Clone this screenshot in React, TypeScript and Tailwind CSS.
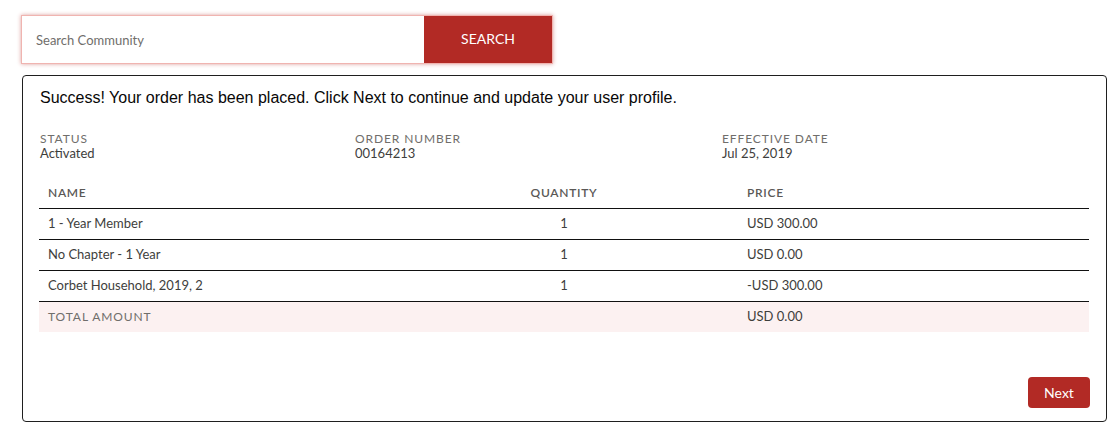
const rows = [
  { name: "1 - Year Member", qty: "1", price: "USD 300.00" },
  { name: "No Chapter - 1 Year", qty: "1", price: "USD 0.00" },
  { name: "Corbet Household, 2019, 2", qty: "1", price: "-USD 300.00" },
];

export default function App() {
  return (
    <div className="h-[427px] w-[1119px] bg-white font-['Lato','Noto_Sans',sans-serif] text-[#3e3e3c]">
      <div className="pl-[21px] pt-[15px]">
        <div className="flex h-[49px] w-[532px] border border-[#f0b4b0] shadow-[0_0_4px_rgba(178,42,37,0.45)]">
          <input
            className="h-full flex-1 bg-white px-[14px] text-[13px] text-[#3e3e3c] outline-none placeholder:text-[#706e6b]"
            placeholder="Search Community"
          />
          <button className="h-full w-[128px] bg-[#b22a25] pb-[2px] text-[14px] text-white">SEARCH</button>
        </div>
      </div>

      <div className="ml-[22px] mt-[11px] flex h-[347px] w-[1085px] flex-col rounded-[4px] border border-[#1f1f1f] px-[16px] pt-[12px]">
        <p className="pl-[1px] font-['Liberation_Sans',Arial,sans-serif] text-[16px] leading-[20px] text-[#080707]">
          Success! Your order has been placed. Click Next to continue and update your user profile.
        </p>

        <div className="mt-[24px] flex pl-[1px] text-[13px] leading-[14px]">
          <div className="w-[315px]">
            <div className="text-[12px] tracking-[0.9px] text-[#706e6b]">STATUS</div>
            <div>Activated</div>
          </div>
          <div className="w-[367px]">
            <div className="text-[12px] tracking-[0.9px] text-[#706e6b]">ORDER NUMBER</div>
            <div>00164213</div>
          </div>
          <div>
            <div className="text-[12px] tracking-[0.9px] text-[#706e6b]">EFFECTIVE DATE</div>
            <div>Jul 25, 2019</div>
          </div>
        </div>

        <div className="mt-[15px] w-[1050px] text-[13px]">
          <div className="grid h-[34px] grid-cols-[450px_150px_1fr] items-center border-b border-[#111] pt-[2px] text-[12px] font-semibold tracking-[0.7px] text-[#5a5856]">
            <div className="pl-[9px]">NAME</div>
            <div className="text-center">QUANTITY</div>
            <div className="pl-[108px]">PRICE</div>
          </div>
          {rows.map((r) => (
            <div
              key={r.name}
              className="grid h-[31px] grid-cols-[450px_150px_1fr] items-center border-b border-[#111]"
            >
              <div className="pl-[9px]">{r.name}</div>
              <div className="text-center">{r.qty}</div>
              <div className="pl-[108px]">{r.price}</div>
            </div>
          ))}
          <div className="grid h-[30px] grid-cols-[450px_150px_1fr] items-center bg-[#fcf1f1]">
            <div className="pl-[9px] text-[12px] tracking-[0.9px] text-[#706e6b]">TOTAL AMOUNT</div>
            <div />
            <div className="pl-[108px]">USD 0.00</div>
          </div>
        </div>

        <div className="mt-[45px] flex w-[1051px] justify-end">
          <button className="h-[31px] w-[62px] rounded-[4px] bg-[#b22a25] text-[14px] text-white">Next</button>
        </div>
      </div>
    </div>
  );
}
